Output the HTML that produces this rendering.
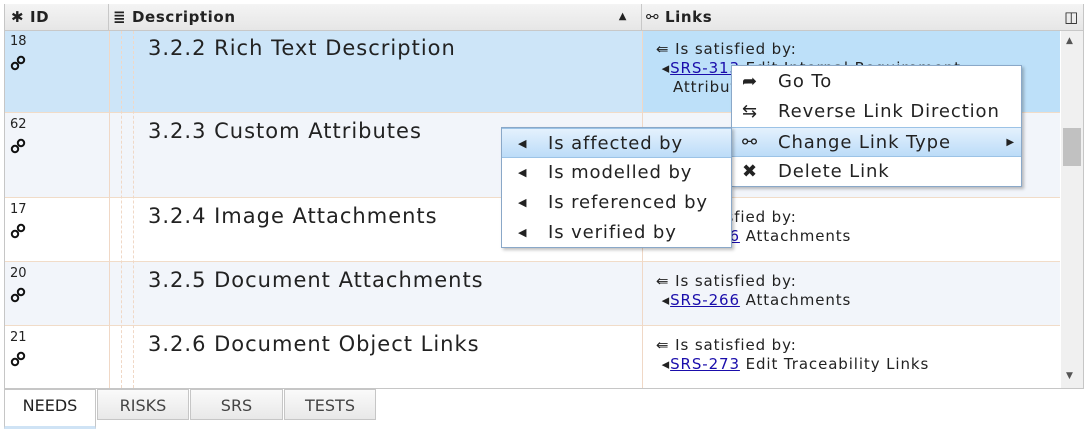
<!DOCTYPE html>
<html><head><style>
*{margin:0;padding:0;box-sizing:border-box}
body{width:1088px;height:433px;background:#fff;font-family:"DejaVu Sans","Liberation Sans",sans-serif;color:#222;position:relative;overflow:hidden}
.a{position:absolute}
.hd{top:4px;height:27px;background:linear-gradient(#f4f4f4,#e6e6e6);border-bottom:1px solid #c8c8c8;font-weight:bold;font-size:15px;line-height:26px;letter-spacing:.6px}
.row{left:5px;width:1055px;border-bottom:1px solid #f1dcc8}
.id{font-size:13px;left:10px}
.chain{left:10px}
.desc{left:148px;font-size:21px;letter-spacing:1px}
.lk{left:656px;font-size:15px;line-height:19px;letter-spacing:.9px}
.lk a{color:#1a0dab;text-decoration:underline}
.menu{background:#fff;border:1px solid #8aa8c8;box-shadow:2px 2px 3px rgba(0,0,0,.25);font-size:18px;letter-spacing:.9px}
.mi{position:absolute;left:0;right:0;height:30px;line-height:30px}
.hl{background:linear-gradient(#e4f1fd,#bcdcf8);border-top:1px solid #9cc3e6;border-bottom:1px solid #9cc3e6}
.tab{top:389px;height:31px;border:1px solid #c6c6c6;background:linear-gradient(#fafafa,#e8e8e8);font-size:16px;text-align:center;line-height:32px;color:#444}
.vl{width:0;border-left:1px dashed #f0d8c6}
</style></head><body>
<svg width="0" height="0" style="position:absolute"><defs><g id="ch"><circle cx="5" cy="12" r="3.2" fill="none" stroke="#111" stroke-width="2"/><circle cx="11" cy="6" r="3.2" fill="none" stroke="#111" stroke-width="2"/></g></defs></svg>
<div class="a" style="left:4px;top:4px;width:1080px;height:385px;border:1px solid #c6c6c6"></div>
<div class="a hd" style="left:5px;width:104px;border-right:1px solid #c8c8c8;padding-left:6px">✱ ID</div>
<div class="a hd" style="left:109px;width:533px;border-right:1px solid #c8c8c8;padding-left:4px">≣ Description<span style="position:absolute;right:14px;font-size:10px">▲</span></div>
<div class="a hd" style="left:642px;width:418px;padding-left:4px">⚯ Links</div>
<div class="a hd" style="left:1060px;width:23px;font-weight:normal;text-align:center">◫</div>

<div class="a row" style="top:31px;height:82px;background:#cde5f8"></div>
<div class="a" style="left:643px;top:31px;width:417px;height:81px;background:#bde0f9"></div>
<div class="a row" style="top:113px;height:85px;background:#f2f5fa"></div>
<div class="a row" style="top:198px;height:64px;background:#fff"></div>
<div class="a row" style="top:262px;height:64px;background:#f2f5fa"></div>
<div class="a row" style="top:326px;height:62px;background:#fff;border:none"></div>
<div class="a" style="left:109px;top:31px;height:357px;border-left:1px solid #f0d8c6"></div>
<div class="a" style="left:642px;top:31px;height:357px;border-left:1px solid #f0d8c6"></div>
<div class="a vl" style="left:121px;top:31px;height:357px"></div>
<div class="a vl" style="left:133px;top:31px;height:357px"></div>

<div class="a id" style="top:34px">18</div><svg class="a chain" style="top:54px" width="17" height="17"><use href="#ch"/></svg>
<div class="a id" style="top:117px">62</div><svg class="a chain" style="top:137px" width="17" height="17"><use href="#ch"/></svg>
<div class="a id" style="top:202px">17</div><svg class="a chain" style="top:222px" width="17" height="17"><use href="#ch"/></svg>
<div class="a id" style="top:266px">20</div><svg class="a chain" style="top:286px" width="17" height="17"><use href="#ch"/></svg>
<div class="a id" style="top:330px">21</div><svg class="a chain" style="top:350px" width="17" height="17"><use href="#ch"/></svg>

<div class="a desc" style="top:36px">3.2.2 Rich Text Description</div>
<div class="a desc" style="top:119px">3.2.3 Custom Attributes</div>
<div class="a desc" style="top:204px">3.2.4 Image Attachments</div>
<div class="a desc" style="top:268px">3.2.5 Document Attachments</div>
<div class="a desc" style="top:332px">3.2.6 Document Object Links</div>

<div class="a lk" style="top:40px">⇚ Is satisfied by:<br>&nbsp;◂<a>SRS-313</a> Edit Internal Requirement<br>&nbsp;&nbsp;&nbsp;Attributes</div>
<div class="a lk" style="top:208px">⇚ Is satisfied by:<br>&nbsp;◂<a>SRS-266</a> Attachments</div>
<div class="a lk" style="top:272px">⇚ Is satisfied by:<br>&nbsp;◂<a>SRS-266</a> Attachments</div>
<div class="a lk" style="top:336px">⇚ Is satisfied by:<br>&nbsp;◂<a>SRS-273</a> Edit Traceability Links</div>

<div class="a" style="left:1061px;top:31px;width:22px;height:357px;background:#f0f0f0"></div>
<div class="a" style="left:1063px;top:128px;width:18px;height:38px;background:#c1c1c1"></div>
<div class="a" style="left:1066px;top:36px;font-size:9px;color:#555">▲</div>
<div class="a" style="left:1066px;top:371px;font-size:9px;color:#555">▼</div>

<div class="a menu" style="left:731px;top:65px;width:291px;height:122px">
<div class="mi" style="top:1px"><span style="position:absolute;left:10px">➦</span><span style="position:absolute;left:46px">Go To</span></div>
<div class="mi" style="top:31px"><span style="position:absolute;left:10px">⇆</span><span style="position:absolute;left:46px">Reverse Link Direction</span></div>
<div class="mi hl" style="top:61px"><span style="position:absolute;left:10px">⚯</span><span style="position:absolute;left:46px">Change Link Type</span><span style="position:absolute;right:6px;font-size:10px">▶</span></div>
<div class="mi" style="top:91px"><span style="position:absolute;left:10px">✖</span><span style="position:absolute;left:46px">Delete Link</span></div>
</div>
<div class="a menu" style="left:501px;top:127px;width:231px;height:121px">
<div class="mi hl" style="top:0"><span style="position:absolute;left:16px;font-size:11px">◀</span><span style="position:absolute;left:46px">Is affected by</span></div>
<div class="mi" style="top:30px"><span style="position:absolute;left:16px;font-size:11px">◀</span><span style="position:absolute;left:46px">Is modelled by</span></div>
<div class="mi" style="top:60px"><span style="position:absolute;left:16px;font-size:11px">◀</span><span style="position:absolute;left:46px">Is referenced by</span></div>
<div class="mi" style="top:90px"><span style="position:absolute;left:16px;font-size:11px">◀</span><span style="position:absolute;left:46px">Is verified by</span></div>
</div>

<div class="a tab" style="left:4px;width:92px;height:40px;background:#fff;border-bottom:3px solid #cfe3f5;color:#222">NEEDS</div>
<div class="a tab" style="left:97px;width:92px">RISKS</div>
<div class="a tab" style="left:190px;width:93px">SRS</div>
<div class="a tab" style="left:284px;width:92px">TESTS</div>
</body></html>
